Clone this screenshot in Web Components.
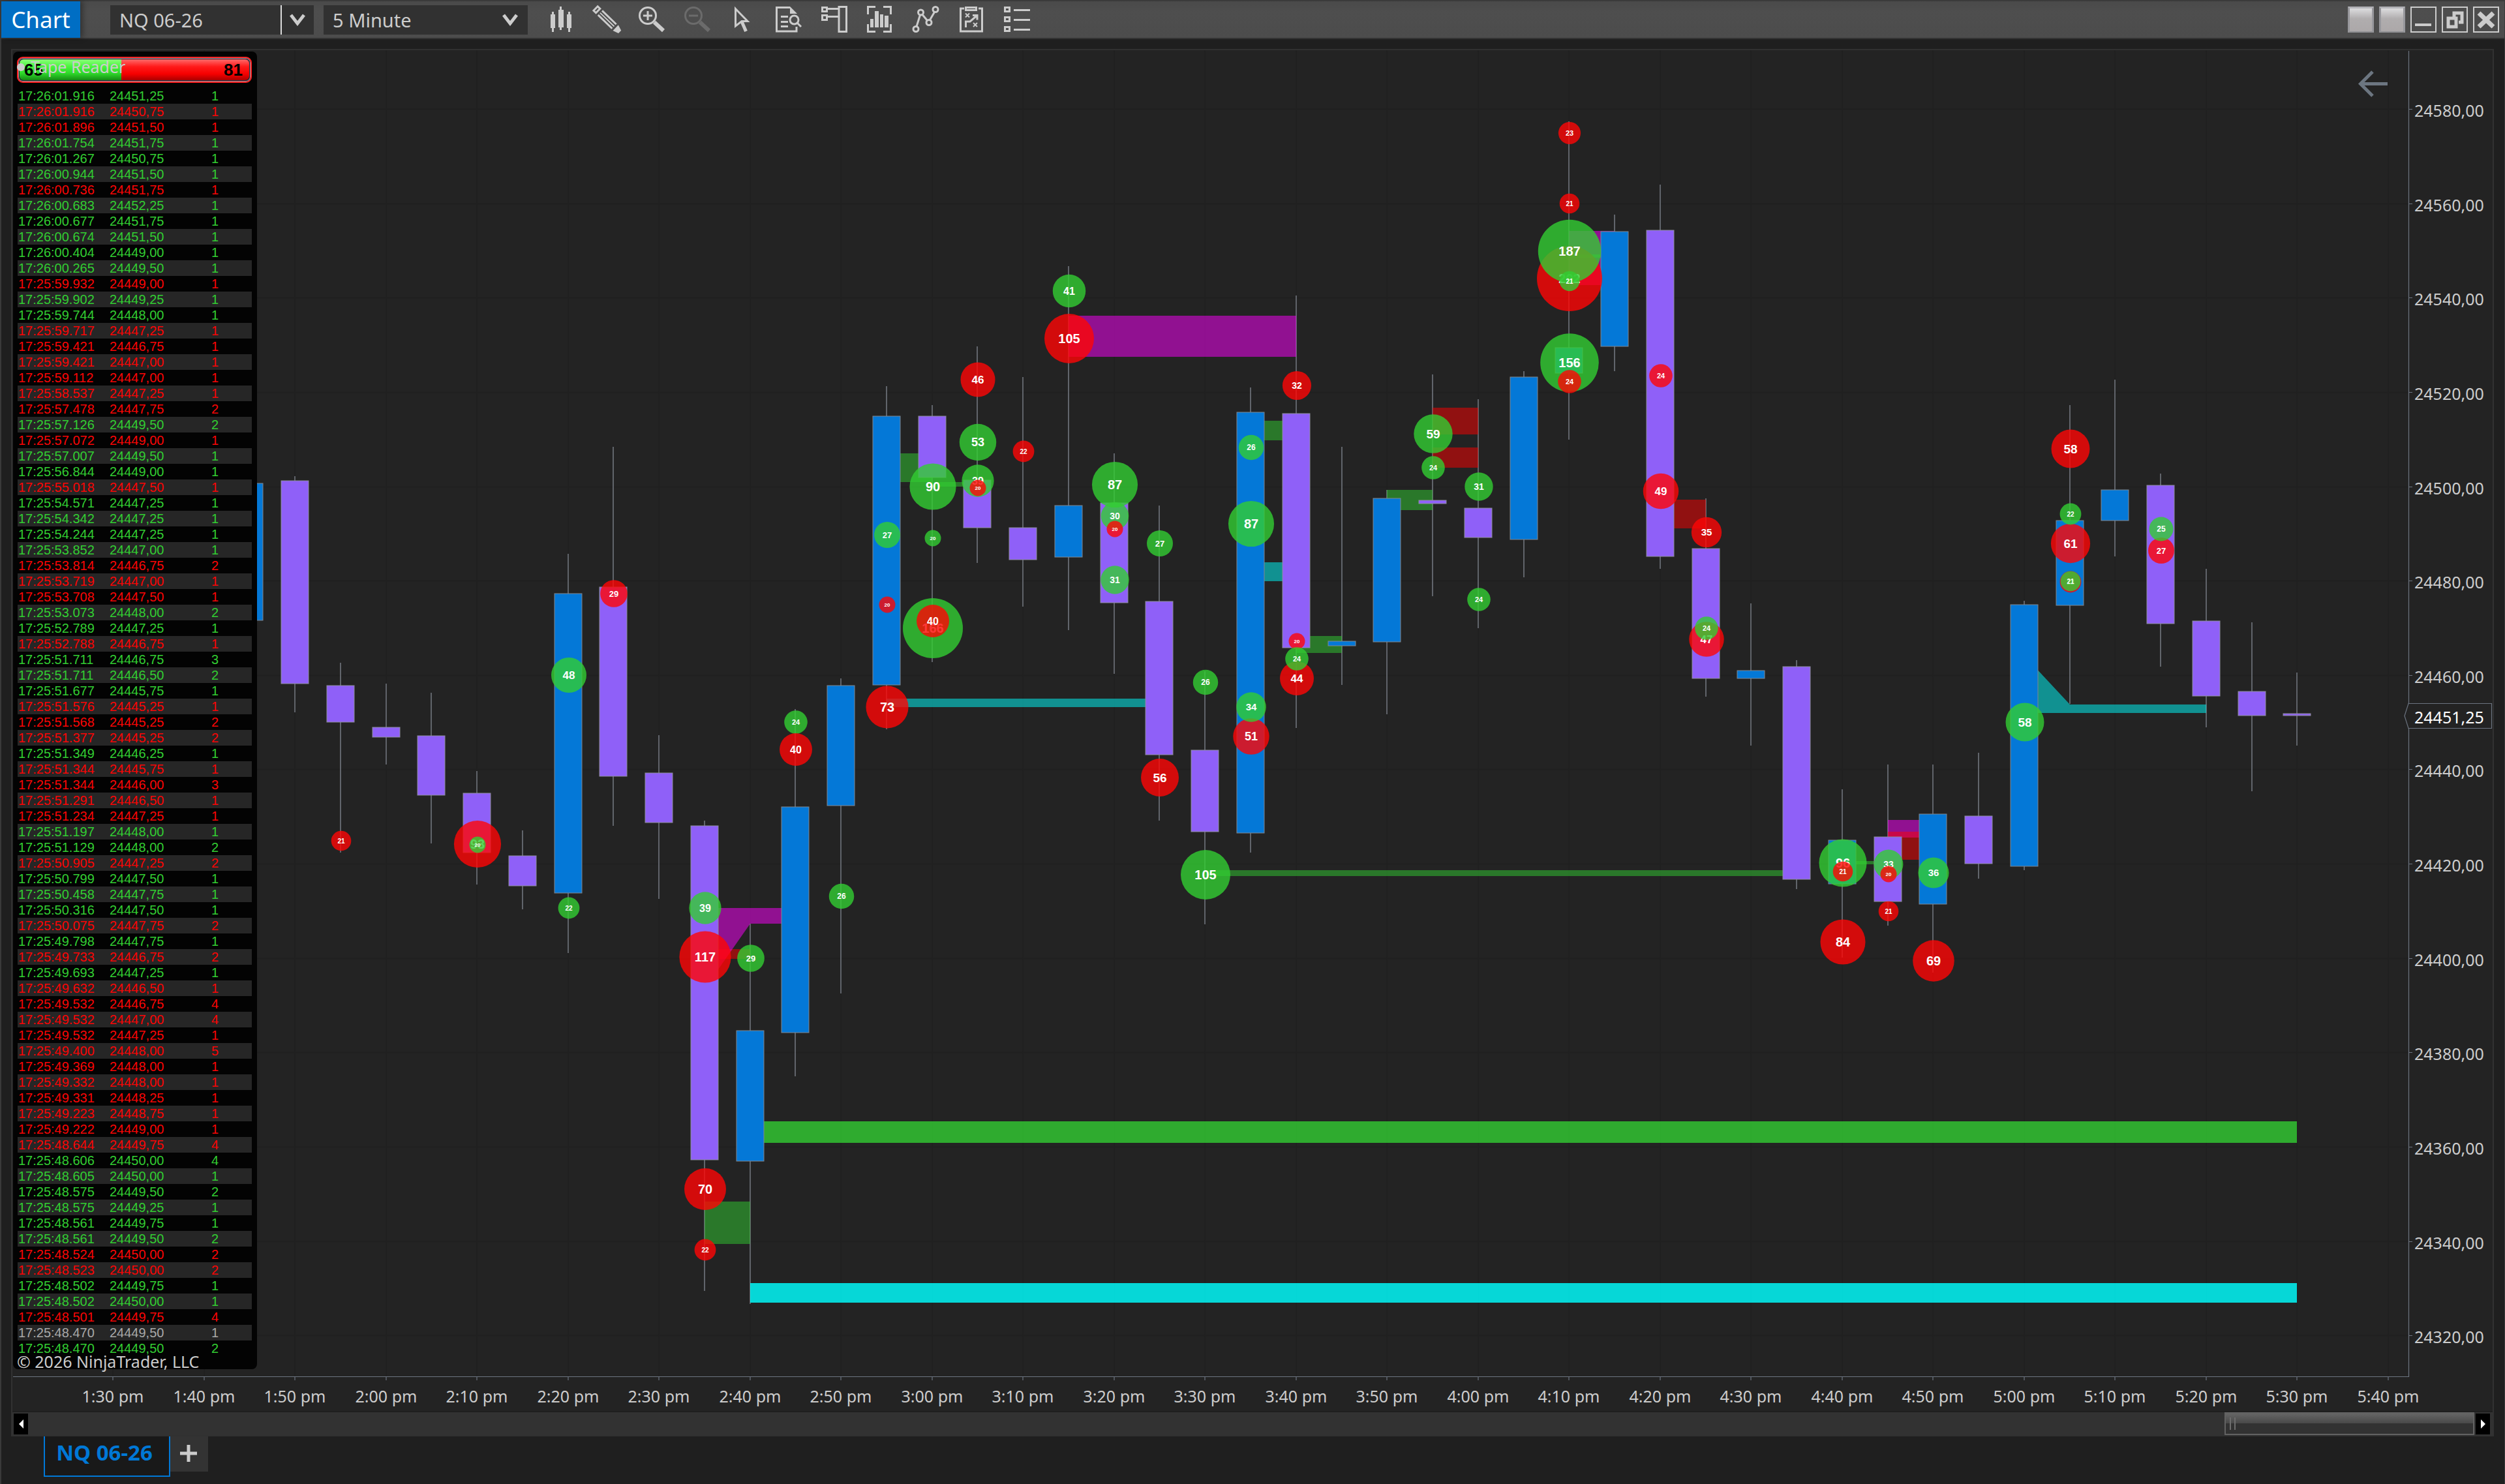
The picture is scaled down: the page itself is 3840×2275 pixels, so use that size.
<!DOCTYPE html>
<html lang="en">
<head>
<meta charset="utf-8">
<title>Chart - NQ 06-26</title>
<style>
  html, body { margin: 0; background: #1f1f1f; }
  body { font-family: "Noto Sans", "Open Sans", sans-serif; color: #ccc; }
</style>
</head>
<body>
<nt-window>
  <nt-toolbar slot="bar"></nt-toolbar>
  <nt-chart></nt-chart>
  <nt-tape slot="overlay"></nt-tape>
  <nt-scrollbar></nt-scrollbar>
  <nt-tabs slot="tabs"></nt-tabs>
</nt-window>

<script>
class Base extends HTMLElement {
  constructor() {
    super();
    this.attachShadow({ mode: 'open' }).innerHTML = this.view();
  }
}

/* Window frame */
customElements.define('nt-window', class extends Base {
  view() {
    return `<style>
      :host { display: flex; flex-direction: column; min-height: 100vh; box-sizing: border-box;
        border-left: 2px solid #3a3a3a; border-right: 1px solid #3a3a3a; background: #1f1f1f; }
      main { position: relative; margin: 15px 16px 0 15px; border: 2px solid #313131; background: #232323; }
    </style>
    <slot name="bar"></slot>
    <main><slot></slot><slot name="overlay"></slot></main>
    <slot name="tabs"></slot>`;
  }
});

/* Toolbar: every icon is drawn in toolbar coordinates, one 70px cell per button */
const ICONS = [
  ['Chart style', `<g fill="#ccc" stroke="none"><path d="M844 22h7v21h-7zM856 15h8v27h-8zM869 22h7v21h-7z"/><path d="M846 18h3v31h-3zM858 10h3v36h-3zM871 18h3v31h-3z"/></g>`],
  ['Drawing tools', `<g transform="translate(912 12) rotate(44)"><path d="M1.500-4.500h5v9h-5zM11-4.500h30M11 4.500h30" stroke-width="3"/><path d="M11 0h30" stroke-width="2"/><path d="M44-6v12l9-3v-6z" fill="#ccc" stroke="none"/></g>`],
  ['Zoom in', `<circle cx="993" cy="24" r="12.500"/><path d="M993 17v14M986 24h14"/><path d="M1003 34l14 13" stroke-width="6"/>`],
  ['Zoom out', `<g stroke="#6b6b6b"><circle cx="1063" cy="24" r="12.500"/><path d="M1056 24h14"/><path d="M1073 34l14 13" stroke-width="6"/></g>`],
  ['Cursor', `<path d="M1127.500 13.500L1146 32.500H1137L1127.500 40z"/><path d="M1137 33l6.500 15" stroke-width="5"/>`],
  ['Data series', `<path d="M1211 11.500H1190.500V48H1221V41"/><path d="M1211 10l11 11h-11z" fill="#ccc" stroke="none"/><path d="M1197 25.500h11M1197 33.500h11M1197 40.500h11M1222 35l6 6"/><circle cx="1217.500" cy="30.500" r="6.500"/>`],
  ['Chart trader', `<path d="M1260.500 11.500h7v6h-7zM1260.500 23.500h7v7h-7zM1268 13.500h17M1268 25.500h17M1286 10.500h11.500v38H1286z"/>`],
  ['Indicators', `<path d="M1330.500 22V10.500H1342M1354 10.500h11.500V22M1330.500 37v11.500H1342M1354 48.500h11.500V37"/><path d="M1334 29h5v13h-5zM1341 17h6v25h-6zM1349 22h5v20h-5zM1356 24h6v18h-6z" fill="#ccc" stroke="none"/>`],
  ['Strategies', `<circle cx="1404" cy="44.500" r="4"/><circle cx="1411.500" cy="19" r="4"/><circle cx="1424" cy="34.500" r="4"/><circle cx="1434" cy="14.500" r="4"/><path d="M1405 40.500l5.500-17.500M1414 22.500l7.500 9M1425.500 30.500l7-12"/>`],
  ['Strategy analyzer', `<path d="M1478 13H1472.500V48H1505.500V13H1500M1480.500 11.500h16v4h-16z"/><path d="M1480 20.500l6 6m0-6l-6 6M1492 35l6 6m0-6l-6 6" stroke-width="2"/><path d="M1480.500 42V33H1487L1498 23.500M1491 23.500h7v7"/>`],
  ['Properties', `<path d="M1540.500 11.500h7v6h-7zM1540.500 26.500h7v6h-7zM1540.500 41.500h7v6h-7zM1554 15.500h25M1554 30.500h25M1554 45.500h25"/>`]
];

customElements.define('nt-toolbar', class extends Base {
  view() {
    const icons = ICONS.map(([name, art], i) =>
      `<button class="tool" aria-label="${name}"><svg viewBox="${825 + i * 70} 2 70 56">${art}</svg></button>`).join('');
    return `<style>
      :host { display: flex; align-items: center; height: 56px; border-top: 2px solid #3b3b3b;
        border-bottom: 2px solid #333; background: linear-gradient(#4a4a4a, #4e4e4e 30%, #4c4c4c); }
      button, input, select { margin: 0; padding: 0; border: 0; border-radius: 0; background: none; font: inherit; color: inherit; outline: 0; }
      svg { display: block; fill: none; stroke: #ccc; stroke-width: 3; }
      .chart { align-self: stretch; width: 121px; margin-right: 46px; background: #006ec4; color: #fff; font-size: 35px;
        line-height: 56px; box-shadow: 4px 0 8px rgba(0,0,0,.35); }
      .combo { display: flex; width: 312px; height: 45px; background: #313131; }
      .combo input { flex: 1; min-width: 0; padding-left: 14px; font-size: 29px; }
      .combo button { width: 51px; box-sizing: border-box; border-left: 2px solid #ddd; }
      .pick { position: relative; width: 313px; height: 45px; margin: 0 16px 0 15px; background: #313131; }
      .pick select { appearance: none; width: 100%; height: 45px; padding-left: 14px; font-size: 29px; }
      .pick svg { position: absolute; right: 1px; top: 0; pointer-events: none; }
      .chev { width: 51px; height: 45px; stroke-width: 5; }
      .tool { width: 70px; height: 56px; }
      .tool svg { width: 70px; height: 56px; }
      .win { display: flex; gap: 8px; margin-left: auto; margin-right: 8px; }
      .win button { width: 40px; height: 40px; box-sizing: border-box; border: 2px solid #ccc; }
      .win svg { width: 36px; height: 36px; }
      .win .link { border: 3px solid #97979c; border-top-color: #b3b3b8; border-bottom: 2px solid #8f8f93;
        background: linear-gradient(#dcdcde, #b0adae 45%, #aca8a9); }
    </style>
    <button class="chart">Chart</button>
    <div class="combo">
      <input aria-label="Instrument" value="NQ 06-26">
      <button aria-label="Choose instrument"><svg class="chev" viewBox="0 0 51 45"><path d="M14 15l10 13 10-13"/></svg></button>
    </div>
    <div class="pick">
      <select aria-label="Interval"><option>5 Minute</option></select>
      <svg class="chev" viewBox="0 0 51 45"><path d="M15 15l10 13 10-13"/></svg>
    </div>
    ${icons}
    <div class="win">
      <button class="link" aria-label="Instrument link"></button>
      <button class="link" aria-label="Interval link"></button>
      <button aria-label="Minimize"><svg viewBox="0 0 36 36"><path d="M5 26h25" stroke-width="4"/></svg></button>
      <button aria-label="Restore"><svg viewBox="0 0 36 36"><path d="M17 14V8h12v14h-5" stroke-width="5"/><path d="M8 16h12v13H8z" stroke-width="5"/></svg></button>
      <button aria-label="Close"><svg viewBox="0 0 36 36"><path d="M7 8l22 21M29 8L7 29" stroke-width="7"/></svg></button>
    </div>`;
  }
});

/* Tape: seconds, price, size, side (g bid up, r down, n neutral) */
const TAPE = `26:01.916 51,25 1 g|26:01.916 50,75 1 r|26:01.896 51,50 1 r|26:01.754 51,75 1 g|26:01.267 50,75 1 g|26:00.944 51,50 1 g|26:00.736 51,75 1 r|26:00.683 52,25 1 g|26:00.677 51,75 1 g|26:00.674 51,50 1 g|26:00.404 49,00 1 g|26:00.265 49,50 1 g|25:59.932 49,00 1 r|25:59.902 49,25 1 g|25:59.744 48,00 1 g|25:59.717 47,25 1 r|25:59.421 46,75 1 r|25:59.421 47,00 1 r|25:59.112 47,00 1 r|25:58.537 47,25 1 r|25:57.478 47,75 2 r|25:57.126 49,50 2 g|25:57.072 49,00 1 r|25:57.007 49,50 1 g|25:56.844 49,00 1 g|25:55.018 47,50 1 r|25:54.571 47,25 1 g|25:54.342 47,25 1 g|25:54.244 47,25 1 g|25:53.852 47,00 1 g|25:53.814 46,75 2 r|25:53.719 47,00 1 r|25:53.708 47,50 1 r|25:53.073 48,00 2 g|25:52.789 47,25 1 g|25:52.788 46,75 1 r|25:51.711 46,75 3 g|25:51.711 46,50 2 g|25:51.677 45,75 1 g|25:51.576 45,25 1 r|25:51.568 45,25 2 r|25:51.377 45,25 2 r|25:51.349 46,25 1 g|25:51.344 45,75 1 r|25:51.344 46,00 3 r|25:51.291 46,50 1 r|25:51.234 47,25 1 r|25:51.197 48,00 1 g|25:51.129 48,00 2 g|25:50.905 47,25 2 r|25:50.799 47,50 1 g|25:50.458 47,75 1 g|25:50.316 47,50 1 g|25:50.075 47,75 2 r|25:49.798 47,75 1 g|25:49.733 46,75 2 r|25:49.693 47,25 1 g|25:49.632 46,50 1 r|25:49.532 46,75 4 r|25:49.532 47,00 4 r|25:49.532 47,25 1 r|25:49.400 48,00 5 r|25:49.369 48,00 1 r|25:49.332 48,00 1 r|25:49.331 48,25 1 r|25:49.223 48,75 1 r|25:49.222 49,00 1 r|25:48.644 49,75 4 r|25:48.606 50,00 4 g|25:48.605 50,00 1 g|25:48.575 49,50 2 g|25:48.575 49,25 1 g|25:48.561 49,75 1 g|25:48.561 49,50 2 g|25:48.524 50,00 2 r|25:48.523 50,00 2 r|25:48.502 49,75 1 g|25:48.502 50,00 1 g|25:48.501 49,75 4 r|25:48.470 49,50 1 n|25:48.470 49,50 2 g`;

customElements.define('nt-tape', class extends Base {
  view() {
    const rows = TAPE.split('|').map(line => {
      const [time, price, size, side] = line.split(' ');
      return `<tr class="${side}"><td>17:${time}</td><td>244${price}</td><td>${size}</td></tr>`;
    }).join('');
    return `<style>
      :host { position: absolute; left: 1px; top: 2px; width: 374px; height: 2020px; box-sizing: border-box;
        padding: 8px 8px 0 6px; border-radius: 8px; background: #030303; }
      .ratio { position: relative; display: flex; height: 40px; box-sizing: border-box; padding: 1px; border: 2px solid #f22;
        border-radius: 9px; background: #1c2030; box-shadow: inset 0 0 0 1px #9a9aa5; margin-bottom: 8px;
        font: bold 26px/34px "Liberation Sans", sans-serif; color: #000; }
      .up, .down { margin: 1px 0; line-height: 32px; }
      .up { flex: 65 1 0; padding-left: 7px; margin-left: 1px; box-sizing: border-box; border-radius: 6px 0 0 6px; background: linear-gradient(#8cff7c, #48f53c 35%, #2fdc2b 65%, #168a14); }
      .down { flex: 81 1 0; padding-right: 10px; margin-right: 1px; box-sizing: border-box; text-align: right; border-radius: 0 6px 6px 0; background: linear-gradient(#ff6a6a, #ff1a1a 35%, #f60000 70%, #a00); }
      .name { position: absolute; left: 19px; top: -3px; font: 25px/32px "Noto Sans", sans-serif; color: #ccc; white-space: nowrap; }
      .dot { position: absolute; left: -2px; top: 8px; width: 12px; height: 12px; border-radius: 50%; background: #ccc; }
      table { width: 359px; margin-left: 1px; border-collapse: collapse; table-layout: fixed; font: 20px/24px "Liberation Sans", sans-serif; }
      td { padding: 0 0 0 1px; height: 24px; white-space: nowrap; }
      td:nth-child(1) { width: 139px; }
      td:nth-child(2) { width: 109px; }
      td:nth-child(3) { padding: 0 0 0 47px; }
      tr:nth-child(even) { background: #262626; }
      .g { color: #32cd32; } .r { color: #f90505; } .n { color: #a9a9a9; }
      p { margin: 0; font-size: 25px; line-height: 16px; white-space: nowrap; }
    </style>
    <div class="ratio"><span class="up">65</span><span class="down">81</span><span class="dot"></span><span class="name">Tape Reader</span></div>
    <table aria-label="Tape">${rows}</table>
    <p>© 2026 NinjaTrader, LLC</p>`;
  }
});

/* Chart. Bars are five minutes apart, counted from 1:30 pm:
   [bar, direction, high, low, body top, body bottom] */
const BARS = [
  [3,'u',741,951,741,951],[4,'d',730,1092,737,1048],[5,'d',1016,1307,1051,1107],[6,'d',1048,1172,1115,1130],
  [7,'d',1062,1293,1128,1219],[8,'d',1182,1356,1216,1307],[9,'d',1273,1394,1312,1358],[10,'u',849,1461,910,1369],
  [11,'d',685,1266,900,1190],[12,'d',1127,1378,1185,1261],[13,'d',1258,1979,1266,1778],[14,'u',1416,1999,1580,1780],
  [15,'u',1087,1650,1237,1583],[16,'u',1040,1523,1051,1235],[17,'u',592,1118,638,1050],[18,'d',621,1015,638,732],
  [19,'d',531,863,736,809],[20,'d',578,930,809,858],[21,'u',408,966,775,854],[22,'d',695,1033,771,924],
  [23,'d',775,1258,922,1157],[24,'d',1029,1417,1150,1275],[25,'u',594,1307,632,1277],[26,'d',453,1116,634,993],
  [27,'u',685,1050,983,990],[28,'u',751,1095,764,984],[29,'d',574,914,767,772],[30,'d',612,963,779,824],
  [31,'u',569,885,578,827],[32,'u',186,674,533,572],[33,'u',329,569,355,531],[34,'d',283,872,353,853],
  [35,'d',764,1068,841,1040],[36,'u',925,1143,1028,1040],[37,'d',1012,1363,1022,1348],[38,'u',1210,1468,1288,1355],
  [39,'d',1172,1419,1283,1382],[40,'u',1172,1491,1248,1386],[41,'d',1154,1347,1251,1324],[42,'u',921,1334,927,1328],
  [43,'u',621,1079,798,928],[44,'u',582,853,751,798],[45,'d',726,1022,744,956],[46,'d',872,1115,952,1067],
  [47,'d',954,1213,1060,1097],[48,'d',1031,1143,1094,1097]
];
/* Zones: [first bar, last bar, top, bottom, colour, opacity] */
const ZONES = [
  [13,14,1455,1470,'#f00',.5],[14,48,1719,1752,'#32cd32',.8],[13,14,1842,1907,'#32cd32',.5],[14,48,1967,1997,'#0ff',.82],
  [17,18,695,739,'#32cd32',.5],[18,19,739,746,'#32cd32',.5],[21,26,484,547,'#f0f',.5],[17,23,1071,1084,'#0ff',.5],
  [25,26,645,675,'#32cd32',.5],[25,26,862,891,'#0ff',.5],[26,27,975,1001,'#32cd32',.5],[24,37,1334,1343,'#32cd32',.5],
  [28,29,751,782,'#32cd32',.5],[29,30,625,666,'#f00',.5],[29,30,686,717,'#f00',.5],[32,33,354,437,'#f0f',.5],
  [32,33,390,395,'#32cd32',.5],[34,35,766,810,'#f00',.5],[38,39,1320,1325,'#32cd32',.5],[39,40,1257,1284,'#f0f',.5],
  [39,40,1275,1318,'#f00',.5]
];
/* Volume bubbles: [bar, y, volume, side] */
const BUBBLES = [
  [5,1289,21,'r'],[8,1294,93,'r'],[8,1295,20,'g'],[10,1035,48,'g'],[10,1392,22,'g'],[11,910,29,'r'],
  [13,1392,39,'g'],[13,1467,117,'r'],[13,1823,70,'r'],[13,1916,22,'r'],[14,1469,29,'g'],[15,1107,24,'g'],[15,1149,40,'r'],
  [16,1374,26,'g'],[17,820,27,'g'],[17,927,20,'r'],[17,1084,73,'r'],[18,746,90,'g'],[18,825,20,'g'],[18,963,166,'g'],[18,952,40,'r'],
  [19,582,46,'r'],[19,678,53,'g'],[19,737,39,'g'],[19,748,20,'r'],[20,692,22,'r'],[21,446,41,'g'],[21,519,105,'r'],
  [22,743,87,'g'],[22,791,30,'g'],[22,811,20,'r'],[22,889,31,'g'],[23,833,27,'g'],[23,1192,56,'r'],
  [24,1046,26,'g'],[24,1341,105,'g'],[25,686,26,'g'],[25,803,87,'g'],[25,1129,51,'r'],[25,1084,34,'g'],
  [26,591,32,'r'],[26,983,20,'r'],[26,1040,44,'r'],[26,1010,24,'g'],[29,665,59,'g'],[29,717,24,'g'],
  [30,746,31,'g'],[30,919,24,'g'],[32,204,23,'r'],[32,312,21,'r'],[32,427,202,'r'],[32,385,187,'g'],[32,431,21,'g'],
  [32,556,156,'g'],[32,585,24,'r'],[34,576,24,'r'],[34,753,49,'r'],[35,816,35,'r'],[35,980,47,'r'],[35,963,24,'g'],
  [38,1323,96,'g'],[38,1336,21,'r'],[38,1444,84,'r'],[39,1325,33,'g'],[39,1340,20,'r'],[39,1397,21,'r'],
  [40,1338,36,'g'],[40,1473,69,'r'],[42,1107,58,'g'],[43,688,58,'r'],[43,833,61,'r'],[43,788,22,'g'],[43,892,22,'r'],[43,891,21,'g'],
  [45,844,27,'r'],[45,811,25,'g']
];
/* Bubble radius grows with volume, linearly between these points */
const RADII = [[20,12.5],[21,15.3],[22,16.4],[24,17.8],[27,20],[31,21.7],[35,23.2],[40,25],[48,27],[58,29.5],[70,32],[90,35.6],[105,38],[117,39.6],[156,44.8],[166,46],[187,48.2],[202,50]];
const radius = v => {
  const k = Math.max(1, RADII.findIndex(p => p[0] >= v));
  const [a, ra] = RADII[k - 1], [b, rb] = RADII[k];
  return ra + (rb - ra) * (v - a) / (b - a);
};
const barX = i => Math.round(173 + 69.76 * i);

customElements.define('nt-chart', class extends Base {
  view() {
    let grid = '', labels = '', ticks = '';
    for (let k = 0; k < 14; k++) {
      const y = Math.round(167 + k * 144.64);
      grid += `M19 ${y}.5H3692`;
      ticks += `M3692 ${y}.5h6`;
      labels += `<text x="3701" y="${y + 12}">${24580 - 20 * k},00</text>`;
    }
    for (let k = 0; k < 26; k++) {
      const x = barX(k * 2), m = 90 + k * 10;
      grid += `M${x} 77V2110`;
      ticks += `M${x} 2110v6`;
      labels += `<text x="${x}" y="2150" text-anchor="middle">${Math.floor(m / 60)}:${String(m % 60).padStart(2, '0')} pm</text>`;
    }
    const wicks = BARS.map(([i,, h, l]) => i === 3 ? '' : `M${barX(i)} ${h}V${l}`).join('');
    const zones = ZONES.map(([a, b, t, u, c, o]) =>
      `<rect x="${barX(a)}" y="${t}" width="${barX(b) - barX(a)}" height="${u - t}" fill="${c}" fill-opacity="${o}"/>`).join('') +
      `<path d="M${barX(13)} 1392H${barX(15)}V1416H${barX(14)}L${barX(13)} 1516z" fill="#f0f" fill-opacity=".5"/>` +
      `<path d="M${barX(42)} 1005L${barX(43)} 1080H${barX(46)}V1093H${barX(42)}z" fill="#0ff" fill-opacity=".5"/>`;
    const bodies = BARS.map(([i, d,,, t, b]) =>
      `<rect x="${barX(i) - 21}" y="${t}" width="42" height="${b - t}" class="${d}"/>`).join('');
    const bubbles = BUBBLES.map(([i, y, v, s]) => {
      const r = radius(v), f = Math.min(20, Math.round(r * .64)), x = barX(i) + 1;
      return `<circle cx="${x}" cy="${y}" r="${r}" class="${s}"/>` +
        `<text x="${x}" y="${y + Math.round(f * .36)}" style="font-size:${f}px" class="v">${v}</text>`;
    }).join('');
    return `<style>
      :host { display: block; }
      svg { display: block; width: 100%; height: auto; }
      text { font: 25px "Noto Sans", "Open Sans", sans-serif; fill: #ccc; }
      .u { fill: #0478d7; stroke: #808790; } .d { fill: #8f60f8; stroke: #8e8e9c; }
      .g { fill: #32cd32; fill-opacity: .8; } .r { fill: #ff0505; fill-opacity: .8; }
      .v { font-family: "Liberation Sans", sans-serif; font-weight: bold; fill: #fff; text-anchor: middle; }
    </style>
    <svg viewBox="19 77 3802 2086" role="img" aria-label="NQ 06-26, 5 minute candles">
      <path d="${grid}" stroke="#202020" stroke-width="2" fill="none"/>
      <path d="${wicks}" stroke="#8b919c" stroke-width="1.2" fill="none"/>
      ${zones}${bodies}${bubbles}
      <path d="M3692.500 78V2110.500H20${ticks}" stroke="#6c7480" stroke-width="1.200" fill="none"/>
      ${labels}
      <path d="M3660 128.500H3619M3637 110l-18.500 18.500 18.500 18.500" stroke="#6c7681" stroke-width="5" fill="none"/>
      <path d="M3692 1078.500H3819.500V1116.500H3692L3686 1097.500z" fill="#232323" stroke="#6c7480" stroke-width="1.200"/>
      <text x="3701" y="1109" style="fill:#fff">24451,25</text>
    </svg>`;
  }
});

/* Time scrollbar */
customElements.define('nt-scrollbar', class extends Base {
  view() {
    return `<style>
      :host { display: flex; align-items: center; justify-content: space-between; box-sizing: border-box; height: 37px;
        padding: 0 4px 0 2px; border-top: 2px solid #1f1f1f; background: #323232; }
      button { width: 22px; height: 32px; padding: 0; border: 0; background: #000; }
      svg { display: block; margin: 0 auto; width: 22px; height: 32px; fill: #fff; }
      .thumb { display: flex; gap: 5px; width: 383px; height: 35px; margin-left: auto; margin-right: 2px; padding: 6px 6px; box-sizing: border-box;
        border: 2px solid #626262; background: linear-gradient(#656565, #484848 50%, #323232 50%); }
      i { width: 2px; background: #6d6d6d; }
    </style>
    <button aria-label="Scroll back"><svg viewBox="0 0 22 32"><path d="M15 9v14l-7-7z"/></svg></button>
    <div class="thumb" role="scrollbar" aria-label="Time range" aria-valuenow="100"><i></i><i></i></div>
    <button aria-label="Scroll forward"><svg viewBox="0 0 22 32"><path d="M8 9v14l7-7z"/></svg></button>`;
  }
});

/* Chart tabs */
customElements.define('nt-tabs', class extends Base {
  view() {
    return `<style>
      :host { display: flex; align-items: flex-start; padding-left: 65px; }
      button { margin: 0; padding: 0; border: 0; font: inherit; }
      .tab { width: 194px; height: 62px; box-sizing: border-box; border: solid #0078d7; border-width: 0 2px 2px; background: #191919;
        color: #0078d7; font-weight: bold; font-size: 33px; line-height: 50px; padding: 0 8px 10px 0; }
      .add { width: 58px; height: 54px; background: #333; }
      svg { display: block; width: 58px; height: 54px; stroke: #ccc; stroke-width: 5; }
    </style>
    <button class="tab">NQ 06-26</button>
    <button class="add" aria-label="New tab"><svg viewBox="0 0 58 54"><path d="M15 26h26M28 13v26"/></svg></button>`;
  }
});
</script>
</body>
</html>
